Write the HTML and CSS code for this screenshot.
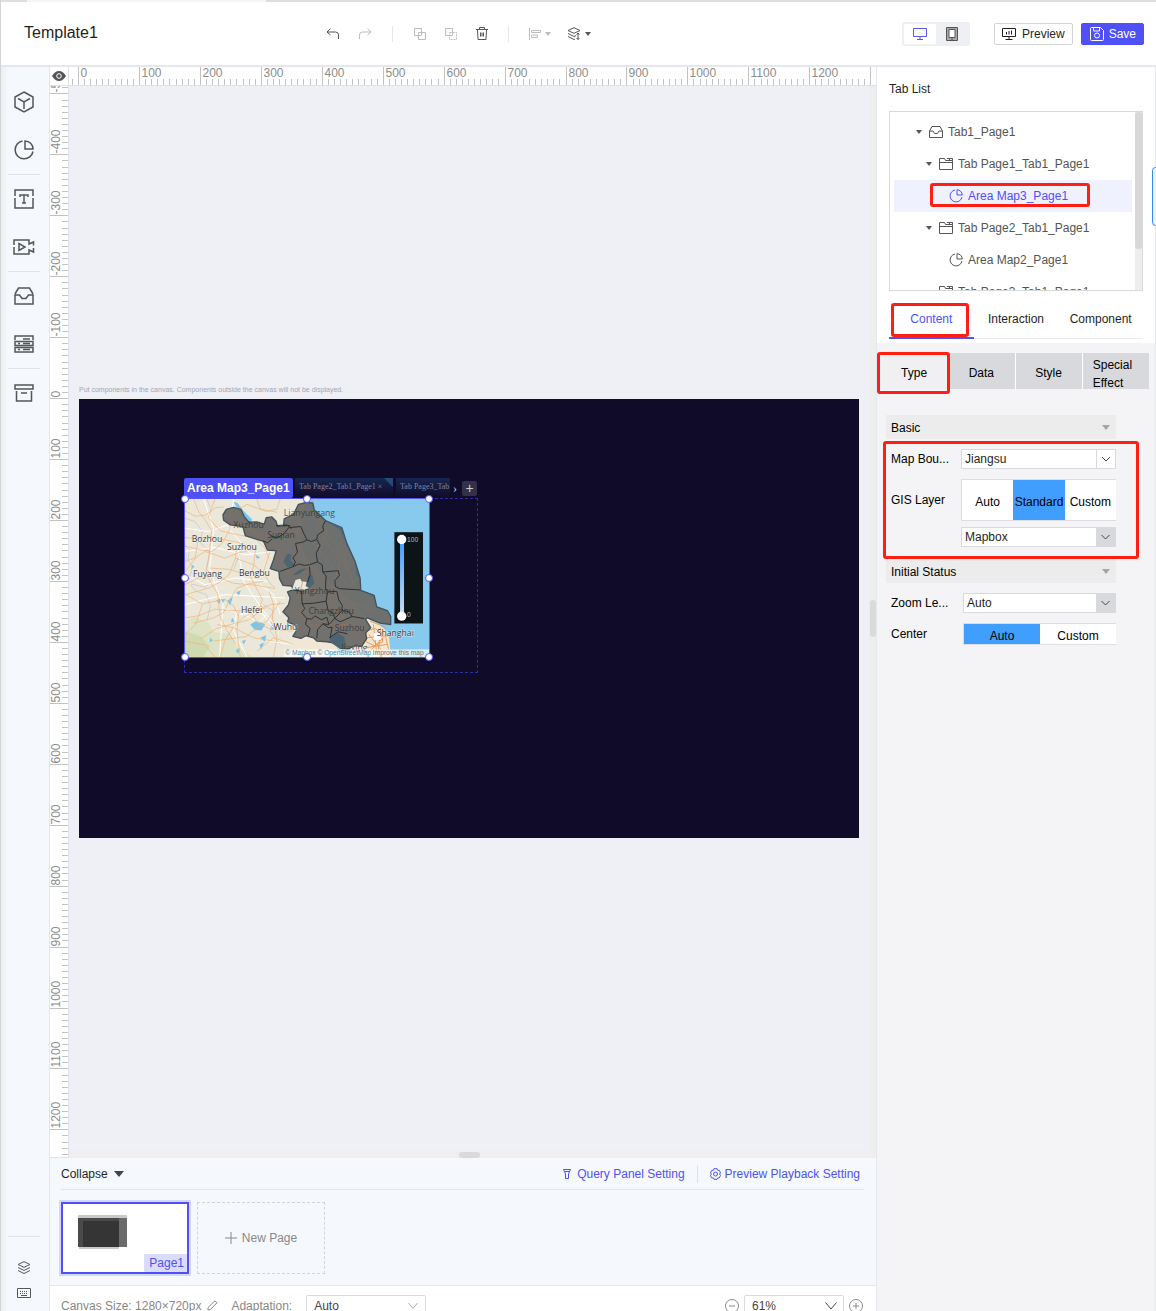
FILE: index.html
```html
<!DOCTYPE html>
<html lang="en">
<head>
<meta charset="utf-8">
<title>Template1</title>
<link rel="stylesheet" href="styles.css">
</head>
<body>
<div class="app">
  <div class="strip"><span class="strip-tab"></span></div>

  <header class="header">
    <h1 class="title">Template1</h1>
    <div class="toolbar">
      <button class="tool" aria-label="Undo"><svg width="14" height="14" viewBox="0 0 14 14"><path d="M4.500 1.500 1 5l3.500 3M1 5h8.500a3 3 0 0 1 3 3v4"/></svg></button>
      <button class="tool faint" aria-label="Redo"><svg width="14" height="14" viewBox="0 0 14 14"><path d="M9.500 1.500 13 5 9.500 8M13 5H4.500a3 3 0 0 0-3 3v4"/></svg></button>
      <span class="tool-sep"></span>
      <button class="tool narrow faint" aria-label="Group"><svg width="12" height="12" viewBox="0 0 12 12"><path d="M.5.5h7v7h-7zM4.500 4.500h7v7h-7z"/></svg></button>
      <button class="tool narrow faint" aria-label="Ungroup"><svg width="12" height="12" viewBox="0 0 12 12"><path d="M.5.5h7v7h-7z"/><path d="M4.500 4.500h7v7h-7z" stroke-dasharray="2 1"/></svg></button>
      <button class="tool narrow" aria-label="Delete"><svg width="12" height="13" viewBox="0 0 12 13"><path d="M0 2.500h12M3.500 2V.5h5V2M1.500 3l.5 9.500h8l.5-9.500M4.500 5.500v4M6 5.500v4M7.500 5.500v4"/></svg></button>
      <span class="tool-sep"></span>
      <button class="tool wide faint" aria-label="Align"><svg width="12" height="12" viewBox="0 0 12 12"><path d="M.5 0v12M2.500 2.500h9v2h-9zM2.500 7h6v2.500h-6z"/></svg><span class="caret"></span></button>
      <button class="tool wide" aria-label="Layer order"><svg width="14" height="13" viewBox="0 0 14 13"><path d="M1 3.500 7 .7l6 2.800-6 2.800zM1 6.500l6 3 2-1M1 9.500l6 3 1-.5M11 6v6.500M9.500 7.500 11 6l1.500 1.500M9.500 11l1.500 1.500 1.500-1.500"/></svg><span class="caret"></span></button>
    </div>
    <div class="actions">
      <div class="device">
        <button class="device-btn on" aria-label="Desktop"><svg width="14" height="12" viewBox="0 0 14 12"><path d="M.5.5h13v8H.5zM7 9v2M4 11.500h6"/></svg></button>
        <button class="device-btn" aria-label="Tablet"><svg width="12" height="14" viewBox="0 0 12 14"><path d="M.5.5h11v13H.5z" fill="#aaa"/><path d="M3 2.500h6v8H3z" fill="#fff"/><path d="M5 12h2"/></svg></button>
      </div>
      <button class="btn"><svg width="14" height="12" viewBox="0 0 14 12"><path d="M.5.5h13v8H.5zM7 9v2M3.500 11.500h7M4.500 4v2.500M7 3v3.500M9.500 2.500v4"/></svg>Preview</button>
      <button class="btn primary"><svg width="14" height="14" viewBox="0 0 14 14"><path d="M.5 1.500a1 1 0 0 1 1-1h9l3 3v9a1 1 0 0 1-1 1h-11a1 1 0 0 1-1-1zM3.500.5V4h6V.5"/><circle cx="7" cy="8.500" r="2.500"/></svg>Save</button>
    </div>
  </header>

  <div class="main">
    <nav class="side" aria-label="Components">
      <button class="side-btn" aria-label="3D"><svg width="20" height="22" viewBox="0 0 20 22"><path d="M10 1l9 5v10l-9 5-9-5V6zM4 7.500l6 3.500 6-3.500M10 11v7"/></svg></button>
      <button class="side-btn" aria-label="Charts"><svg width="20" height="20" viewBox="0 0 20 20"><path d="M8.500 1a9 9 0 1 0 10.500 10.500M11 1v8h8a8 8 0 0 0-8-8z"/></svg></button>
      <hr class="side-line">
      <button class="side-btn" aria-label="Text"><svg width="20" height="20" viewBox="0 0 20 20"><path d="M1 7V1h18v6M1 9v10h18V9M6 8V6h8v2M10 6v8M8 14h4"/></svg></button>
      <button class="side-btn" aria-label="Media"><svg width="22" height="16" viewBox="0 0 22 16"><path d="M1 6V1h15v4l4.500-2v3.500M1 8v7h15v-4l4.500 2V9M6 4.500v7L12 8z"/></svg></button>
      <hr class="side-line">
      <button class="side-btn" aria-label="Tab"><svg width="20" height="18" viewBox="0 0 20 18"><path d="M1 7l3.500-6h11L19 7M1 8h4.500L8 11.500h4L14.500 8H19v9H1z"/></svg></button>
      <button class="side-btn" aria-label="Controls"><svg width="20" height="18" viewBox="0 0 20 18"><path d="M1 5V1h18v4M1 6.500h18v4H1zM1 12.500h18V17H1zM9 4h7M4 8.500h2M9 8.500h7M4 14.500h2M9 14.500h7"/></svg></button>
      <hr class="side-line">
      <button class="side-btn" aria-label="Library"><svg width="20" height="18" viewBox="0 0 20 18"><path d="M1 1h18v4H1zM2.500 7v10h15V7M7 9h6"/></svg></button>
      <div class="side-foot">
        <hr class="side-line">
        <button class="side-btn small" aria-label="Layers"><svg width="14" height="13" viewBox="0 0 14 13"><path d="M1 3.500 7 .7l6 2.800-6 2.800zM1 6.500l6 3 6-3M1 9.500l6 3 6-3"/></svg></button>
        <button class="side-btn small" aria-label="Shortcuts"><svg width="14" height="10" viewBox="0 0 14 10"><path d="M.5.5h13v9H.5z"/><path d="M3 3.500h8M3 5.500h8" stroke-dasharray="1 1"/><path d="M4 7.500h6"/></svg></button>
      </div>
    </nav>

    <section class="center">
      <div class="work">
        <button class="corner" aria-label="Toggle guides"><svg width="14" height="10" viewBox="0 0 14 10"><path d="M0 5Q3 0 7 0t7 5q-3 5-7 5T0 5z" fill="#555" stroke="none"/><circle cx="7" cy="5" r="2.300" stroke="#fff"/></svg></button>
        <svg class="ruler-x" id="ruler-x"></svg>
        <svg class="ruler-y" id="ruler-y"></svg>
        <div class="viewport">
          <div class="stage" id="stage">
            <p class="hint">Put components in the canvas. Components outside the canvas will not be displayed.</p>
            <div class="widget">
              <div class="wtabs">
                <span class="wtab">Tab Page2_Tab1_Page1 <span>×</span></span>
                <span class="wtab last">Tab Page3_Tab</span>
                <span class="wnext">›</span>
                <button class="wadd" aria-label="Add tab">+</button>
              </div>
              <div class="wtitle">Area Map3_Page1</div>
              <div class="map">
                <svg class="map-art" viewBox="44 102 733 476" preserveAspectRatio="none">
                  <defs>
                    <linearGradient id="bar" x1="0" y1="0" x2="0" y2="1"><stop offset="0" stop-color="#409eff"/><stop offset="1" stop-color="#cfdcf2"/></linearGradient>
                  </defs>
                  <rect x="44" y="102" width="733" height="476" fill="#ebe8d9"/>
                  <path d="M44 470l30-12 40 15 15 30 50 5 20 40 50 30H44z" fill="#dfe3c5"/>
                  <path d="M44 500l45 15 30 30-20 33H44z" fill="#d0dab0"/>
                  <path d="M400 102h377v476H660l-10-60-60-60-200-200z" fill="#87caed"/>
                  <path d="M370 500l215-40 40 18 30 28 8 72H370z" fill="#f0e7d5"/>
                  <g fill="#7cc5ea">
                    <path d="M190 110l12 4 16 22 28 28-6 12-26-20zM240 480l20-12 25 12-12 18-20-2zM138 408l15-8-5 18zM152 404l14 0-12 14zM170 410l18-14-8 26zM198 382l14-4-6 16zM186 460l8 14-12-2zM120 520l8 8-10 6zM270 520l18-8-4 20zM268 540l14-6-10 22zM305 480l18 10-20 5zM215 530l12-4-6 14zM65 300l8 6-10 8zM256 270l14 8-10 4zM196 560l12-10-4 18zM500 552l26 8 10 12-30-8z"/>
                  </g>
                  <g fill="none" stroke="#c4c0c8" stroke-width="2">
                    <path d="M44 160l30 10 22 30-6 34 30 30-12 50 20 24-22 30-44-10M44 240l14 16-6 30 14 20-10 40M60 360l18 20 30 10 12 34-10 44M120 130l-10-28M260 250l-50 14-20 50M280 420l30 20-10 60 30 40"/>
                  </g>
                  <g fill="none" stroke="#fff" stroke-width="3">
                    <path d="M44 260l90-12 90 22 90-10M100 102l30 90-12 120 40 110-10 156M200 240l20 110 60 90 50 60M44 420l120-30 180 10M190 102l-14 90 70 80M44 330l60 30 90-20 100 10M160 430l50 20 60-10 40 50M200 440l-10 60 40 78M270 360l40 30 20 60M290 530l80 10M44 190l70 10 60-20M226 452l30-14 30 16-20 20z"/>
                  </g>
                  <g fill="none" stroke="#f0b078" stroke-width="2">
                    <path d="M44 138l32 16 30-4 30-22 24-2M70 102l16 40 18 22 20 34-6 60-10 60 10 30 24 40 8 70 20 40 26 40M44 218l40 4 34-8 40 10 50 10 20 22M134 102l-20 56 36 40 44 10 60 12 30 30 12 30M200 240l-4 40-20 50-30 24-30 16-72 20M256 255l-6 50-10 30 16 30 20 40-12 40-30 22-50 12-46 14-46 30M300 260l-20 60 14 30 20 20M44 460l40-6 50-20 50 4 60 2 60-20 40-4M150 578l14-50 26-40 30-30 30-18 36-10M240 440l18 30 40 24 70 6M330 102l-10 30-30 8-60-22-40 26M44 290l30-10 30-20 60 20 50-20M280 350l-40 6-40 14-24 40-16 34-30 16-60 16M44 388l50 30 70-14 26 20 14 30M330 410l-20 30-20 30-30 20-30 26-100 14M370 540l-60-20-50 40M44 530l60 12 30 36M260 102l10 30 50 10M186 140l-10 60-20 34-30 26-32-4-50-12M84 222l-10 60-30 40M118 310l60 4 60 20M194 280l56 20 40 34M96 420l-20 60-32 30M206 440l-6 60 10 78M296 380l14 40-4 40 14 60-10 58M150 340l40 16 70 6 54 10M44 360l40-20 34-4M140 480l50 10 60 30 60 10"/>
                  </g>
                  <g fill="none" stroke="#f19a55" stroke-width="3">
                    <path d="M590 500l24-8 20 12 4 28-26 12-24-12zM582 520l80-6M610 480l10 90M632 490l-8 80M590 550l60-10M600 470l50 20M575 540l20 38M645 510l14 60M596 510l40 50M640 520l-50 50"/>
                  </g>
                  <path d="M612 506h20v20h-20z" fill="#fff" stroke="none"/>
                  <g transform="translate(30 30)">
                    <path d="M128 120 138 103 160 97 182 103 192 125 206 142 230 141 252 148 258 128 275 126 288 140 292 155 310 153 312 132 340 118 355 88 380 82 398 84 402 104 436 137 485 158 500 205 525 260 540 310 542 347 582 362 590 397 622 408 632 426 632 450 600 446 562 430 556 434 572 460 556 476 560 492 545 515 522 514 505 524 480 522 464 506 440 502 410 500 400 490 378 484 362 492 338 486 350 466 345 452 322 442 326 430 308 412 325 390 330 370 322 352 338 346 335 334 308 332 298 312 296 290 270 282 280 255 288 228 262 226 250 200 225 192 195 182 188 155 150 150 130 136z" fill="#6c6c68" fill-opacity=".96" stroke="#44525a" stroke-width="4" stroke-linejoin="round"/>
                    <path d="M335 346 346 316 360 312 364 320 380 322 376 334 386 340 370 346 350 344z" fill="#ebe8d9"/>
                    <path d="M308 262 322 236 334 240 330 256 344 270 322 278zM384 306 396 300 402 326 388 340 378 332zM338 300 362 284 384 280 352 300zM448 490 470 474 492 488 500 520 474 520 452 504zM436 137 485 158 498 204 480 164zM525 262 538 308 530 300zM270 186 300 182 282 194z" fill="#4d6473"/>
                    <g fill="none" stroke="#96705a" stroke-width="2" opacity=".7"><path d="M140 110l50 45 70 30 80-20 70 50 60 80 60 60M370 90l-20 90 30 90-20 80 40 130M200 160l90 60 40 80M410 160l70 100-30 110 60 90M350 370l80-20 150 60M320 410l100 30 130 20M412 150l60 60 30 80M480 200l40 130M330 390l60 60 120 0M400 110l40 60-20 60M440 380l60 80"/></g>
                    <g fill="none" stroke="#2e3132" stroke-width="3" stroke-linejoin="round">
                      <path d="M310 153 330 152M270 182 290 190 312 176 326 158 362 155 370 174 380 195 394 200 410 194 412 180 430 168 428 152 436 138M288 152 320 150 334 162M380 195 368 202 346 206 352 232 338 250 346 262 338 276 300 290M248 198 262 204 276 192M410 194 420 212 408 236 412 262 426 270 428 292 438 304 436 340 442 352 438 380M338 276 356 268 374 272 388 270 410 262M388 276 390 300 382 324M428 292 474 288 478 302 464 318 466 336 478 342 540 346M442 352 470 350 476 376 486 392 486 408 506 412 516 426 552 432M338 346 364 350 366 388 400 386 438 380 444 408 460 416 464 432 486 408M366 388 374 402 364 414 380 432 376 450 390 462 384 484M380 432 394 434 404 424 424 436 440 428 446 450 428 448 412 466 410 492M446 450 464 432 480 442M428 448 446 460 456 458 450 490M480 442 516 426M448 490 474 472 502 478"/>
                    </g>
                  </g>
                  <g class="place dim"><text x="341" y="153">Lianyungang</text><text x="190" y="188">Xuzhou</text><text x="291" y="220">Suqian</text><text x="374" y="388">Yangzhou</text><text x="415" y="449">Changzhou</text><text x="494" y="501">Suzhou</text><text x="514" y="560">Jiaxing</text></g>
                  <g class="place"><text x="64" y="233">Bozhou</text><text x="170" y="255">Suzhou</text><text x="68" y="336">Fuyang</text><text x="206" y="333">Bengbu</text><text x="212" y="445">Hefei</text><text x="310" y="496">Wuhu</text><text x="620" y="515">Shanghai</text></g>
                  <rect x="342" y="555" width="435" height="23" fill="#fff" fill-opacity=".65"/>
                  <text class="credit" x="345" y="573">© <tspan fill="#3a8fb7">Mapbox</tspan> © <tspan fill="#3a8fb7">OpenStreetMap</tspan> Improve this map</text>
                  <rect x="673" y="202" width="86" height="275" fill="#0c1416"/>
                  <rect x="690" y="225" width="12" height="230" fill="url(#bar)"/>
                  <circle cx="695" cy="224" r="14" fill="#fff"/><circle cx="695" cy="455" r="14" fill="#fff"/>
                  <text class="scale" x="711" y="231">100</text><text class="scale" x="711" y="459">0</text>
                </svg>
                <i class="dot n w"></i><i class="dot n m"></i><i class="dot n e"></i>
                <i class="dot c w"></i><i class="dot c e"></i>
                <i class="dot s w"></i><i class="dot s m"></i><i class="dot s e"></i>
              </div>
            </div>
          </div>
        </div>
        <div class="vbar"><span></span></div>
        <div class="hbar"><span></span></div>
      </div>

      <div class="pages">
        <div class="pages-head">
          <button class="link dark">Collapse <span class="caret big"></span></button>
          <div class="pages-links">
            <button class="link"><svg width="8" height="10" viewBox="0 0 8 10"><path d="M.5.5h7L5.500 5v4.500h-3V5zM2 2.500h4"/></svg>Query Panel Setting</button>
            <button class="link gear"><svg width="11" height="12" viewBox="0 0 11 12"><path d="M4 .7h3l.5 1.500 2 .3 1 2.500-1 1 1 1.500-1.200 2.300-1.800.2L7 11.300H4L3.500 10l-2-.2L.5 7.500l1-1.500-1-1 1-2.500 2-.3z"/><circle cx="5.500" cy="6" r="2"/></svg>Preview Playback Setting</button>
          </div>
        </div>
        <div class="cards">
          <button class="card current"><svg class="thumb" width="50" height="34" viewBox="0 0 50 34"><path d="M0 0h49v3H0zM1 31h40v3H1z" fill="#c9c9c9"/><path d="M0 3h49v29H0z" fill="#6b6b6b"/><path d="M0 3h41v29H0z" fill="#4a4a4a"/><path d="M5 6h36v26H5z" fill="#353535"/></svg><span class="card-name">Page1</span></button>
          <button class="card new"><svg width="12" height="12" viewBox="0 0 12 12"><path d="M6 0v12M0 6h12"/></svg>New Page</button>
        </div>
      </div>

      <footer class="status">
        <span>Canvas Size: 1280×720px</span>
        <button class="pencil" aria-label="Edit canvas size"><svg width="12" height="12" viewBox="0 0 12 12"><path d="M1 10V7.500L8 .8l2 2L3.500 9.500zM5 11.500h7"/></svg></button>
        <label for="adapt">Adaptation:</label>
        <div class="pick adapt"><select id="adapt"><option>Auto</option></select><svg width="10" height="8" viewBox="0 0 10 8"><path d="M.5 1 5 6.500 9.500 1"/></svg></div>
        <div class="zoom">
          <button class="round" aria-label="Zoom out"><svg width="14" height="14" viewBox="0 0 14 14"><circle cx="7" cy="7" r="6.500"/><path d="M4 7h6"/></svg></button>
          <div class="pick level"><select aria-label="Zoom level"><option>61%</option></select><svg width="12" height="8" viewBox="0 0 12 8"><path d="M.5.5 6 7 11.500.5"/></svg></div>
          <button class="round" aria-label="Zoom in"><svg width="14" height="14" viewBox="0 0 14 14"><circle cx="7" cy="7" r="6.500"/><path d="M4 7h6M7 4v6"/></svg></button>
        </div>
      </footer>
    </section>

    <aside class="panel">
      <span class="drawer"></span>
      <div class="panel-top">
        <h2 class="panel-title">Tab List</h2>
        <div class="tree-box">
          <ul class="tree">
            <li class="node l1"><span class="caret"></span><svg width="14" height="12" viewBox="0 0 14 12"><path d="M.5 5 3 .5h8L13.500 5v6.500H.5zM.5 5h3.500l1.500 2.500h3L10 5h3.500"/></svg>Tab1_Page1</li>
            <li class="node l2"><span class="caret"></span><svg width="14" height="12" viewBox="0 0 14 12"><path d="M.5 11.500V.5h5l1 2h7v9zM.5 4.500h13M8 .5h5.500v2M10.500.5v2"/></svg>Tab Page1_Tab1_Page1</li>
            <li class="node l3 picked"><span class="mark"></span><svg width="14" height="14" viewBox="0 0 14 14"><path d="M6 1a6 6 0 1 0 7 7M8 .7V6h5.300A5.500 5.500 0 0 0 8 .7z"/></svg>Area Map3_Page1</li>
            <li class="node l2"><span class="caret"></span><svg width="14" height="12" viewBox="0 0 14 12"><path d="M.5 11.500V.5h5l1 2h7v9zM.5 4.500h13M8 .5h5.500v2M10.500.5v2"/></svg>Tab Page2_Tab1_Page1</li>
            <li class="node l3"><svg width="14" height="14" viewBox="0 0 14 14"><path d="M6 1a6 6 0 1 0 7 7M8 .7V6h5.300A5.500 5.500 0 0 0 8 .7z"/></svg>Area Map2_Page1</li>
            <li class="node l2"><span class="caret"></span><svg width="14" height="12" viewBox="0 0 14 12"><path d="M.5 11.500V.5h5l1 2h7v9zM.5 4.500h13M8 .5h5.500v2M10.500.5v2"/></svg>Tab Page3_Tab1_Page1</li>
          </ul>
          <div class="tree-bar"><span></span></div>
        </div>
        <div class="tabs">
          <button class="tab on">Content<span class="mark"></span></button>
          <button class="tab">Interaction</button>
          <button class="tab">Component</button>
        </div>
      </div>

      <div class="subtabs">
        <button class="subtab on">Type<span class="mark"></span></button>
        <button class="subtab">Data</button>
        <button class="subtab">Style</button>
        <button class="subtab two">Special Effect</button>
      </div>

      <div class="form">
        <button class="group">Basic<span class="caret mid"></span></button>
        <div class="fields">
          <span class="mark"></span>
          <div class="row"><label for="bounds">Map Bou...</label><div class="pick plain"><select id="bounds"><option>Jiangsu</option></select><svg width="10" height="6" viewBox="0 0 10 6"><path d="M1 1l4 4 4-4"/></svg></div></div>
          <div class="row"><span class="label">GIS Layer</span><div class="seg tall"><button>Auto</button><button class="on">Standard</button><button>Custom</button></div></div>
          <div class="row"><span class="label"></span><div class="pick"><select aria-label="GIS Layer source"><option>Mapbox</option></select><svg width="10" height="6" viewBox="0 0 10 6"><path d="M1 1l4 4 4-4"/></svg></div></div>
        </div>
        <button class="group">Initial Status<span class="caret mid"></span></button>
        <div class="fields second">
          <div class="row"><label for="zoomlevel">Zoom Le...</label><div class="pick"><select id="zoomlevel"><option>Auto</option></select><svg width="10" height="6" viewBox="0 0 10 6"><path d="M1 1l4 4 4-4"/></svg></div></div>
          <div class="row"><span class="label">Center</span><div class="seg"><button class="on">Auto</button><button>Custom</button></div></div>
        </div>
      </div>
    </aside>
  </div>
</div>
<script src="rulers.js"></script>
</body>
</html>
```
FILE: styles.css
```css
* { box-sizing: border-box; }
body { margin: 0; font: 12px/18px "Liberation Sans", Arial, sans-serif; color: #1f1f24; background: #fff; }
h1, h2, p, ul { margin: 0; padding: 0; font-weight: 400; }
ul { list-style: none; }
button { font: inherit; color: inherit; background: none; border: 0; padding: 0; margin: 0; }
svg { fill: none; stroke: currentColor; flex: none; display: block; }
svg text { stroke: none; }

.app { height: 100vh; display: flex; flex-direction: column; overflow: hidden; border-left: 1px solid #d4d4d4; }
.strip { flex: none; height: 2px; background: #dedede; }
.strip-tab { display: block; margin-left: 26px; width: 239px; height: 2px; background: #f6f6f6; }

.header { flex: none; display: flex; align-items: center; height: 65px; padding: 0 12px 0 23px; border-bottom: 2px solid #e6e7ee; }
.title { width: 293px; padding-bottom: 2px; font-size: 16px; line-height: 20px; }
.toolbar { display: flex; align-items: center; color: #555; flex: 1; }
.tool { width: 32px; height: 24px; display: flex; align-items: center; justify-content: center; gap: 4px; }
.tool.narrow { width: 31px; }
.tool.wide { width: 39px; }
.faint { color: #bdbdbd; }
.tool-sep { width: 1px; height: 16px; margin: 0 11px; background: #e6e6ea; }
.caret { flex: none; border: solid transparent; border-width: 4px 3px 0; border-top-color: currentColor; }
.caret.mid { border-width: 5px 4px 0; }
.caret.big { border-width: 6px 5px 0; }

.actions { display: flex; align-items: center; gap: 8px; }
.device { display: flex; padding: 2px; margin-right: 16px; width: 68px; height: 24px; background: #eff0f4; border-radius: 2px; color: #555; }
.device-btn { width: 32px; height: 20px; display: flex; align-items: center; justify-content: center; border-radius: 2px; }
.device-btn.on { background: #fff; color: #5657f5; }
.btn { display: flex; align-items: center; gap: 6px; height: 22px; padding: 0 7px; border: 1px solid #d4d4d8; border-radius: 2px; }
.btn.primary { background: #4f50f8; border-color: #4f50f8; color: #fff; padding: 0 7px 0 8px; gap: 5px; }

.main { flex: 1; min-height: 0; display: grid; grid-template-columns: 48px 1fr 280px; }

.side { display: flex; flex-direction: column; align-items: center; padding: 11px 2px 0 0; background: linear-gradient(90deg, #eceff2, #f5f9fd 8px); color: #555; }
.side-btn { width: 46px; height: 48px; display: flex; align-items: center; justify-content: center; }
.side-btn svg { stroke-width: 1.500; }
.side-btn.small { height: 26px; }
.side-btn.small svg { stroke-width: 1; }
.side-line { width: 32px; height: 1px; margin: 0; border: 0; background: #dfe3e8; }
.side-foot { margin-top: auto; padding-bottom: 5px; display: flex; flex-direction: column; align-items: center; }
.side-foot .side-line { margin-bottom: 17px; }

.center { display: flex; flex-direction: column; min-width: 0; border-left: 1px solid #e4e6ec; }
.work { flex: 1; min-height: 0; display: grid; grid-template-columns: 19px 1fr 7px; grid-template-rows: 19px 1fr 7px; background: #eee; }
.corner { display: flex; align-items: center; justify-content: center; background: #fff; border: solid #e0e1e6; border-width: 0 1px 1px 0; }
.ruler-x { grid-column: 2 / 4; width: 100%; height: 19px; background: #fff; border-bottom: 1px solid #e0e1e6; }
.ruler-y { grid-row: 2 / 4; width: 19px; height: 100%; background: #fff; border: solid #e0e1e6; border-width: 0 1px 1px 0; }
.ruler-x, .ruler-y { stroke: #c2c2c2; overflow: hidden; }
.ruler-x text, .ruler-y text { fill: #8c8c8c; font-size: 12px; }
.viewport { display: flex; flex-direction: column; justify-content: center; padding: 0 10px; background: #eff0f5; min-width: 0; min-height: 0; overflow: hidden; }
.stage { position: relative; aspect-ratio: 16 / 9; background: #100b29; }
.hint { position: absolute; bottom: 100%; left: 0; padding-bottom: 4px; font-size: 7px; line-height: 10px; color: #a4a5b4; white-space: nowrap; }
.vbar, .hbar { display: flex; align-items: center; justify-content: center; }
.vbar span { width: 6px; height: 37px; border-radius: 3px; background: #dadada; }
.hbar span { width: 21px; height: 6px; border-radius: 3px; background: #dadada; }

.widget { position: absolute; left: 105px; top: 99px; width: 294px; height: 175px; border: 1px dashed #2f2fa0; }
.wtitle { position: absolute; left: -1px; bottom: 100%; height: 20px; margin-bottom: 1px; padding: 0 3px; background: #4f50f8; color: #fff; font-weight: 700; line-height: 20px; white-space: nowrap; border-radius: 2px; }
.wtabs { position: absolute; left: 110px; right: 0; bottom: 100%; height: 20px; margin-bottom: 1px; display: flex; gap: 3px; align-items: center; font: 8px/18px "Liberation Serif", serif; color: #8481a0; }
.wtab { height: 20px; padding-left: 4px; white-space: nowrap; overflow: hidden; background: linear-gradient(#16264f, #100b29); }
.wtab:first-child { width: 98px; background: linear-gradient(225deg, #244a78 6px, transparent 7px), linear-gradient(#16264f, #100b29); }
.wtab.last { width: 54px; }
.wnext { color: #c8d0e4; font-size: 12px; line-height: 16px; }
.wadd { margin-left: auto; width: 15px; height: 15px; background: #343047; color: #c8c8d0; border-radius: 2px; font: 14px/14px "Liberation Sans", sans-serif; }
.map { position: absolute; left: -1px; top: -1px; width: 246px; height: 160px; border: 1px solid #5556f5; }
.map-art { width: 100%; height: 100%; stroke: none; }
.place text { font: 26px "Open Sans", "Noto Sans", sans-serif; fill: #33363c; stroke: #fff; stroke-width: 3px; stroke-opacity: .6; paint-order: stroke; }
.place.dim text { fill: #2f3030; fill-opacity: .8; stroke: none; }
.credit { font-size: 20px; fill: #6b6f70; }
.scale { font-size: 20px; fill: #b9bdc0; }
.dot { position: absolute; width: 8px; height: 8px; margin: -4px; border: 1px solid #5556f5; border-radius: 50%; background: #fff; }
.dot.n { top: 0; } .dot.c { top: 50%; } .dot.s { top: 100%; }
.dot.w { left: 0; } .dot.m { left: 50%; } .dot.e { left: 100%; }

.pages { flex: none; height: 128px; padding: 0 12px 0 11px; background: #f5f9fd; border-bottom: 1px solid #e4e6ec; }
.pages-head { display: flex; justify-content: space-between; align-items: center; height: 32px; border-bottom: 1px solid #e2e5ea; }
.pages-links { display: flex; }
.link { display: flex; align-items: center; gap: 6px; color: #4f50f8; }
.link.dark { color: #1f1f24; }
.link.gear { margin-left: 12px; padding: 0 4px 0 12px; border-left: 1px solid #dfe2e8; gap: 4px; }
.link .caret { color: #444; }
.cards { display: flex; gap: 8px; padding-top: 12px; }
.card { position: relative; width: 128px; height: 72px; background: #fff; }
.card.current { border: 2px solid #4f50f8; box-shadow: 0 0 0 2px #d5d7fb; color: #4f50f8; }
.thumb { position: absolute; left: 15px; top: 11px; stroke: none; }
.card-name { position: absolute; right: 0; bottom: 0; padding: 0 3px 0 5px; background: #dadcfc; }
.card.new { display: flex; align-items: center; justify-content: center; gap: 5px; border: 1px dashed #d4d4d4; background: none; color: #888; }

.status { flex: none; height: 25px; padding: 9px 13px 0 11px; display: flex; align-items: flex-start; overflow: hidden; line-height: 22px; color: #888; background: #fff; white-space: nowrap; }
.pencil { margin: 5px 12px 0 6px; }
.status .pick { height: 22px; border-radius: 2px; }
.status .pick svg { width: 12px; margin-right: 6px; background: none; }
.adapt { width: 120px; margin-left: 14px; color: #aaa; }
.level { width: 100px; }
.zoom { margin-left: auto; display: flex; gap: 5px; color: #444; }
.round { height: 22px; color: #888; }

.pick { display: flex; align-items: center; height: 20px; border: 1px solid #d9d9de; background: #fff; }
.pick select { flex: 1; min-width: 0; height: 18px; padding: 0 3px; border: 0; appearance: none; background: none; font: inherit; line-height: 18px; color: #1f1f24; }
.status .pick select { height: 20px; padding: 0 7px; color: #444; }

.panel { position: relative; min-width: 0; background: #f4f4f7; border: solid #e6e8f0; border-width: 0 1px; }
.drawer { position: absolute; right: -4px; top: 100px; width: 7px; height: 59px; background: #ecf3ff; border: 1px solid #3b82f6; border-radius: 4px; }
.panel-top { height: 276px; padding: 12px 12px 0; background: #fff; }
.panel-title { font-size: 12px; line-height: 20px; }
.tree-box { display: flex; height: 180px; margin-top: 12px; border: 1px solid #d9d9d9; overflow: hidden; }
.tree { flex: 1; padding: 4px 3px 0 4px; }
.node { position: relative; display: flex; align-items: center; height: 32px; gap: 5px; color: #555; }
.node .caret { margin-right: 2px; }
.l1 { padding-left: 22px; }
.l2 { padding-left: 32px; }
.l3 { padding-left: 55px; }
.picked { background: #f0f1ff; color: #4f50f8; }
.tree-bar { width: 7px; background: #eee; }
.tree-bar span { display: block; height: 137px; border-radius: 3px; background: #d8d8d8; }
.tabs { display: flex; height: 48px; border-bottom: 1px solid #eaeaee; }
.tab { position: relative; height: 48px; flex: 1; display: flex; justify-content: center; align-items: center; padding-top: 9px; border-bottom: 2px solid transparent; }
.tab.on { color: #4f50f8; border-bottom-color: #4f50f8; }

.mark { position: absolute; z-index: 1; border: 3px solid #ff1f12; border-radius: 3px; pointer-events: none; }
.node .mark { left: 36px; top: 3px; width: 160px; height: 24px; }
.tab .mark { left: 2px; top: 12px; width: 78px; height: 34px; }
.subtab .mark { left: -4px; top: -1px; width: 73px; height: 42px; }
.fields .mark { left: -3px; top: 2px; width: 256px; height: 118px; }

.subtabs { display: grid; grid-template-columns: repeat(4, 1fr); gap: 1px; margin: 10px 6px 0 4px; background: #fff; }
.subtab { position: relative; height: 36px; padding-top: 3px; background: #d8d9dd; color: #000; }
.subtab.on { background: #f0f0f2; }
.subtab.two { padding: 3px 10px 0; text-align: left; }
.form { padding: 26px 39px 0 9px; color: #000; }
.group { display: flex; align-items: center; justify-content: space-between; width: 100%; height: 24px; padding: 1px 6px 0 5px; background: #ececed; }
.group .caret { color: #a4a4a4; }
.fields { position: relative; display: grid; gap: 10px; padding: 10px 0 12px 5px; }
.row { display: grid; grid-template-columns: 70px 1fr; }
.row:nth-child(4) { margin-top: -4px; }
.row label, .row .label { line-height: 20px; }
.row .label:not(:empty) { align-self: center; }
.second .row { grid-template-columns: 72px 1fr; }
.fields .pick svg { width: 19px; height: 18px; padding: 6px 4px; background: #d8d9dd; color: #444; }
.fields .plain svg { background: #fff; border-left: 1px solid #d9d9de; }
.seg { display: flex; height: 22px; border: solid #dcdce2; border-width: 1px 0 1px 1px; background: #fff; }
.seg.tall { height: 42px; }
.seg button { flex: 1 1 0; min-width: 0; white-space: nowrap; padding-top: 3px; }
.seg .on { background: #409eff; }
```
FILE: rulers.js
```
// Draws the tick marks and labels of both rulers from the stage's place and scale.
(function () {
  var NS = 'http://www.w3.org/2000/svg';
  var stage = document.getElementById('stage');

  function add(svg, tag, attrs, text) {
    var node = document.createElementNS(NS, tag);
    Object.keys(attrs).forEach(function (k) { node.setAttribute(k, attrs[k]); });
    if (text !== undefined) node.textContent = text;
    svg.appendChild(node);
  }

  function draw() {
    var area = stage.getBoundingClientRect();
    var scale = area.width / 1280;
    ['x', 'y'].forEach(function (axis) {
      var svg = document.getElementById('ruler-' + axis);
      var box = svg.getBoundingClientRect();
      var across = axis === 'x';
      var origin = across ? area.left - box.left : area.top - box.top;
      var length = across ? box.width : box.height;
      svg.replaceChildren();
      var first = Math.ceil(-origin / (scale * 10));
      var last = Math.floor((length - origin) / (scale * 10));
      for (var i = first; i <= last; i++) {
        var at = Math.round(origin + i * 10 * scale) - 0.5;
        var start = i % 10 === 0 ? 0 : 12;
        add(svg, 'line', across ? { x1: at, x2: at, y1: start, y2: 18 } : { y1: at, y2: at, x1: start, x2: 18 });
        // A label is left out where the ruler ends before it has room.
        if (i % 10 === 0 && (!across || at + 12 < length)) {
          add(svg, 'text', across
            ? { x: at + 2, y: 10 }
            : { transform: 'translate(10 ' + (at - 1) + ') rotate(-90)' }, i * 10);
        }
      }
    });
  }

  draw();
  window.addEventListener('resize', draw);
})();
```
